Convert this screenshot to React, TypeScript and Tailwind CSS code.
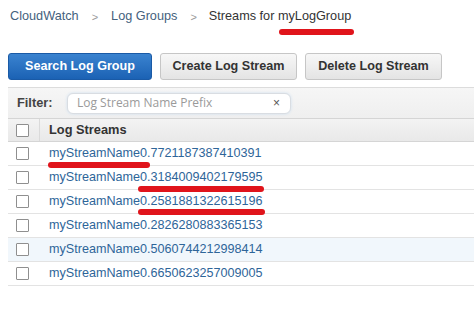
import React from "react";

const streams = [
  "myStreamName0.7721187387410391",
  "myStreamName0.3184009402179595",
  "myStreamName0.2581881322615196",
  "myStreamName0.2826280883365153",
  "myStreamName0.5060744212998414",
  "myStreamName0.6650623257009005",
];

function Box() {
  return <div className="w-[13px] h-[13px] border border-[#8f8f8f] bg-white rounded-[1px]" />;
}

export default function App() {
  return (
    <div className="relative w-[474px] h-[313px] bg-white overflow-hidden font-['Liberation_Sans',Arial,sans-serif]">
      {/* breadcrumb */}
      <div className="h-[34px] flex items-center pl-[10px] text-[12.7px]">
        <span className="text-[#44617d]">CloudWatch</span>
        <span className="text-[#9a9a9a] ml-[13px] mr-[13px] text-[11px]">&gt;</span>
        <span className="text-[#44617d]">Log Groups</span>
        <span className="text-[#9a9a9a] ml-[13px] mr-[12px] text-[11px]">&gt;</span>
        <span className="text-[#333]">Streams for myLogGroup</span>
      </div>

      {/* buttons */}
      <div className="mt-[19px] pl-[8px] flex gap-[8px] text-[12.6px] font-bold">
        <button className="w-[144px] h-[27px] rounded-[3px] bg-gradient-to-b from-[#3a83d0] to-[#1b62b4] border border-[#1a5aa6] text-white">
          Search Log Group
        </button>
        <button className="w-[137px] h-[27px] rounded-[3px] bg-gradient-to-b from-[#f7f7f7] to-[#e4e4e4] border border-[#c6c6c6] text-[#333]">
          Create Log Stream
        </button>
        <button className="w-[137px] h-[27px] rounded-[3px] bg-gradient-to-b from-[#f7f7f7] to-[#e4e4e4] border border-[#c6c6c6] text-[#333]">
          Delete Log Stream
        </button>
      </div>

      {/* filter */}
      <div className="mt-[7px] ml-[8px] h-[31px] border-t border-[#dcdcdc] bg-gradient-to-b from-[#f6f6f6] to-[#efefef] flex items-center pl-[9px]">
        <span className="w-[41px] text-[12.8px] font-bold text-[#444]">Filter:</span>
        <div className="ml-[9px] w-[224px] h-[21px] bg-white rounded-[6px] border border-[#d9dde2] shadow-[0_0_3px_#cfe0f0] flex items-center pl-[9px] pr-[10px]">
          <span className="flex-1 text-[12px] text-[#9a9a9a] font-['Open_Sans',sans-serif]">Log Stream Name Prefix</span>
          <span className="text-[12px] text-[#555]">×</span>
        </div>
      </div>

      {/* table */}
      <div className="ml-[8px]">
        <div className="h-[24px] flex items-center border-t border-b border-[#d5d5d5] bg-gradient-to-b from-[#f3f3f3] to-[#e9e9e9]">
          <div className="w-[32px] h-full flex items-center pl-[8px] border-r border-[#dadada]">
            <Box />
          </div>
          <span className="pl-[9px] text-[12.8px] font-bold text-[#333]">Log Streams</span>
        </div>
        {streams.map((s, i) => (
          <div
            key={s}
            className={
              i === 4
                ? "h-[24px] flex items-center border-b border-[#e3e3e3] bg-[#f1f7fc]"
                : "h-[24px] flex items-center border-b border-[#e3e3e3] bg-white"
            }
          >
            <div className="w-[32px] pl-[8px]">
              <Box />
            </div>
            <span className="pl-[9px] text-[12.6px] text-[#2e6599]">{s}</span>
          </div>
        ))}
      </div>

      {/* red annotations */}
      <div className="absolute left-[279px] top-[29px] w-[75px] h-[6px] rounded-full bg-[#e0141b]" />
      <div className="absolute left-[48px] top-[162px] w-[102px] h-[6px] rounded-full bg-[#e0141b]" />
      <div className="absolute left-[138px] top-[186px] w-[126px] h-[6px] rounded-full bg-[#e0141b]" />
      <div className="absolute left-[138px] top-[209px] w-[127px] h-[6px] rounded-full bg-[#e0141b]" />
    </div>
  );
}
